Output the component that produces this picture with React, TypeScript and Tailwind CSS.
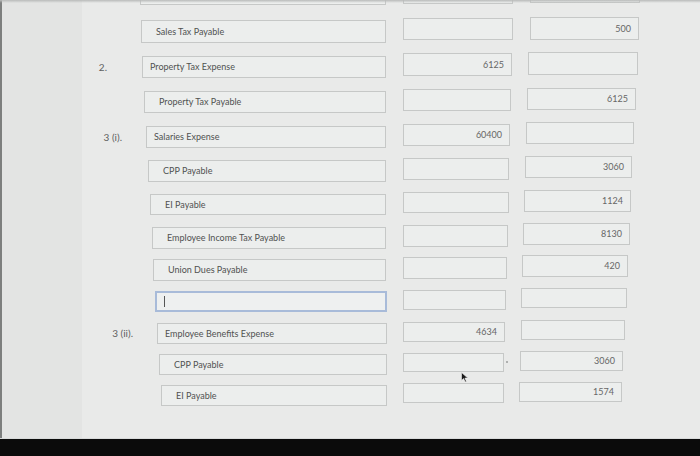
import React from 'react';

interface Row {
  label?: string;
  labelPad?: string;
  lead: string;
  acct: string;
  acctText?: string;
  indent?: boolean;
  focused?: boolean;
  debit: string;
  debitVal?: string;
  credit: string;
  creditVal?: string;
  h: string;
}

const rows: Row[] = [
  { lead: 'w-[58px] mt-[2px] h-[22px]', acct: 'w-[246px] mt-[2px] h-[22px]', debit: 'ml-[17px] w-[110px] mt-[1px] h-[22px]', credit: 'ml-[17px] w-[110px] h-[22px]', h: 'h-[36px]' },
  { lead: 'w-[59px] mt-[3px] h-[23px]', acct: 'w-[245px] mt-[3px] h-[23px]', acctText: 'Sales Tax Payable', indent: true, debit: 'ml-[17px] w-[110px] mt-[1px] h-[22px]', credit: 'ml-[17px] w-[109px] h-[23px]', creditVal: '500', h: 'h-[35px]' },
  { label: '2.', labelPad: 'pr-[35px]', lead: 'w-[60px] mt-[4px] h-[22px]', acct: 'w-[244px] mt-[4px] h-[22px]', acctText: 'Property Tax Expense', debit: 'ml-[17px] w-[109px] mt-[1px] h-[23px]', debitVal: '6125', credit: 'ml-[16px] w-[110px] h-[23px]', h: 'h-[36px]' },
  { lead: 'w-[62px] mt-[3px] h-[22px]', acct: 'w-[242px] mt-[3px] h-[22px]', acctText: 'Property Tax Payable', indent: true, debit: 'ml-[17px] w-[108px] mt-[1px] h-[22px]', credit: 'ml-[16px] w-[109px] h-[22px]', creditVal: '6125', h: 'h-[34px]' },
  { label: '3 (i).', labelPad: 'pr-[24px]', lead: 'w-[64px] mt-[4px] h-[22px]', acct: 'w-[240px] mt-[4px] h-[22px]', acctText: 'Salaries Expense', debit: 'ml-[17px] w-[107px] mt-[2px] h-[22px]', debitVal: '60400', credit: 'ml-[16px] w-[108px] h-[22px]', h: 'h-[34px]' },
  { lead: 'w-[66px] mt-[4px] h-[22px]', acct: 'w-[238px] mt-[4px] h-[22px]', acctText: 'CPP Payable', indent: true, debit: 'ml-[17px] w-[106px] mt-[2px] h-[22px]', credit: 'ml-[16px] w-[107px] h-[22px]', creditVal: '3060', h: 'h-[34px]' },
  { lead: 'w-[68px] mt-[4px] h-[21px]', acct: 'w-[236px] mt-[4px] h-[21px]', acctText: 'EI Payable', indent: true, debit: 'ml-[17px] w-[106px] mt-[2px] h-[21px]', credit: 'ml-[15px] w-[107px] h-[22px]', creditVal: '1124', h: 'h-[33px]' },
  { lead: 'w-[70px] mt-[4px] h-[22px]', acct: 'w-[234px] mt-[4px] h-[22px]', acctText: 'Employee Income Tax Payable', indent: true, debit: 'ml-[17px] w-[105px] mt-[2px] h-[22px]', credit: 'ml-[15px] w-[107px] h-[22px]', creditVal: '8130', h: 'h-[32px]' },
  { lead: 'w-[71px] mt-[4px] h-[22px]', acct: 'w-[233px] mt-[4px] h-[22px]', acctText: 'Union Dues Payable', indent: true, debit: 'ml-[17px] w-[104px] mt-[2px] h-[22px]', credit: 'ml-[15px] w-[106px] h-[22px]', creditVal: '420', h: 'h-[33px]' },
  { lead: 'w-[73px] mt-[3px] h-[21px]', acct: 'w-[232px] mt-[3px] h-[21px]', focused: true, debit: 'ml-[16px] w-[103px] mt-[2px] h-[20px]', credit: 'ml-[15px] w-[106px] h-[20px]', h: 'h-[32px]' },
  { label: '3 (ii).', labelPad: 'pr-[24px]', lead: 'w-[75px] mt-[3px] h-[21px]', acct: 'w-[230px] mt-[3px] h-[21px]', acctText: 'Employee Benefits Expense', debit: 'ml-[16px] w-[102px] mt-[2px] h-[20px]', debitVal: '4634', credit: 'ml-[16px] w-[104px] h-[20px]', h: 'h-[31px]' },
  { lead: 'w-[77px] mt-[3px] h-[21px]', acct: 'w-[228px] mt-[3px] h-[21px]', acctText: 'CPP Payable', indent: true, debit: 'ml-[16px] w-[101px] mt-[2px] h-[19px]', credit: 'ml-[16px] w-[103px] h-[20px]', creditVal: '3060', h: 'h-[31px]' },
  { lead: 'w-[79px] mt-[3px] h-[21px]', acct: 'w-[226px] mt-[3px] h-[21px]', acctText: 'EI Payable', indent: true, debit: 'ml-[16px] w-[101px] mt-[1px] h-[20px]', credit: 'ml-[15px] w-[103px] h-[20px]', creditVal: '1574', h: 'h-[31px]' },
];

function AmountBox({ cls, value }: { cls: string; value?: string }) {
  return (
    <div className={`${cls} shrink-0 border border-[#c6c8c7] bg-[#eceeed] flex items-center justify-end pr-[7px] text-[9px] text-[#666]`}>
      {value}
    </div>
  );
}

export default function App() {
  return (
    <div className="w-[700px] h-[456px] flex flex-col bg-black overflow-hidden" style={{ fontFamily: 'Lato, "Open Sans", sans-serif' }}>
      {/* Screen */}
      <div className="relative flex-1 flex bg-[#e9eae9] overflow-hidden">
        <div className="absolute top-0 left-0 right-0 h-[3px] bg-gradient-to-b from-[#b9bbba] to-transparent" />
        <div className="w-[2px] bg-[#7d7f7e]" />
        <div className="w-[80px] bg-[#e3e4e3]" />

        <div className="flex-1 flex flex-col mt-[-19px]">
          {rows.map((r, i) => (
            <div key={i} className={`${r.h} flex items-start shrink-0`}>
              <div className={`${r.lead} ${r.labelPad ?? ''} shrink-0 flex items-center justify-end text-[10px] text-[#5f6160]`}>
                {r.label}
              </div>
              <div
                className={`${r.acct} shrink-0 flex items-center text-[9px] text-[#505251] ${
                  r.focused
                    ? 'border-2 border-[#a8bbd9] bg-[#eef0f0] pl-[6px]'
                    : 'border border-[#c6c8c7] bg-[#eceeed]'
                } ${r.indent ? 'pl-[14px]' : 'pl-[7px]'}`}
              >
                {r.focused ? <span className="w-px h-[11px] bg-[#555]" /> : r.acctText}
              </div>
              <AmountBox cls={r.debit} value={r.debitVal} />
              <AmountBox cls={r.credit} value={r.creditVal} />
            </div>
          ))}
        </div>

        {/* mouse pointer */}
        <svg className="absolute left-[461px] top-[372px]" width="8" height="11" viewBox="0 0 8 11">
          <path d="M0.5 0.5 L0.5 8.5 L2.6 6.6 L4.2 10 L5.4 9.4 L3.9 6.1 L6.8 6.1 Z" fill="#1a1a1a" stroke="#f2f2f2" strokeWidth="0.6" />
        </svg>
        <div className="absolute left-[506px] top-[361px] w-[2px] h-[2px] rounded-full bg-[#9a9c9b]" />
      </div>
      {/* Bezel */}
      <div className="h-[18px] bg-[#0b0b0b] shrink-0 border-t border-[#d8dada]" />
    </div>
  );
}
